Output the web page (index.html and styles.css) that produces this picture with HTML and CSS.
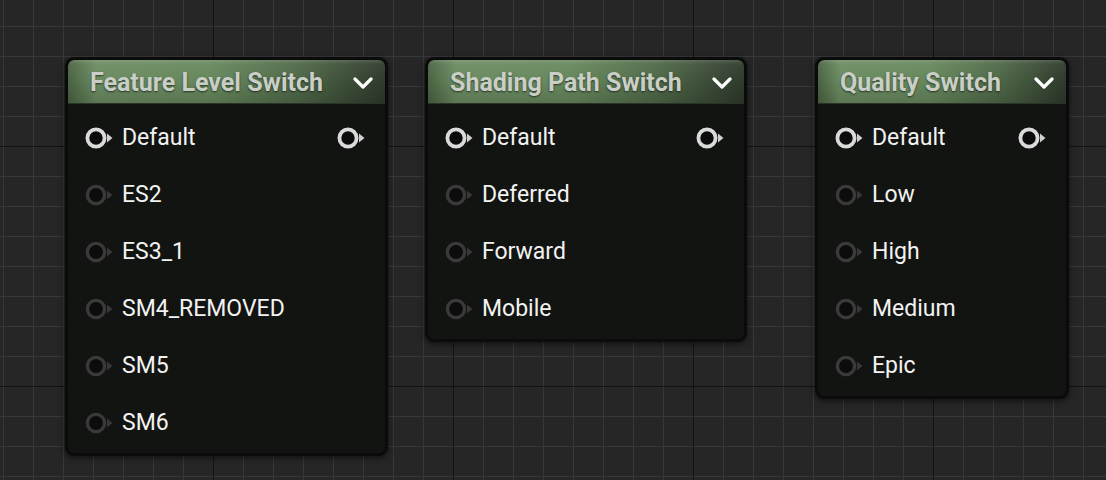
FILE: index.html
```
<!DOCTYPE html>
<html>
<head>
<meta charset="utf-8">
<link rel="stylesheet" href="styles.css">
</head>
<body>
<div class="canvas">
  <div class="node node-feature">
    <div class="header">
      <span class="title">Feature Level Switch</span>
      <svg class="chev" viewBox="0 0 20 12" width="20" height="12"><polyline points="2,2 10,10 18,2" fill="none" stroke="#fff" stroke-width="3.2" stroke-linecap="round" stroke-linejoin="round"/></svg>
    </div>
    <div class="body">
      <div class="row">
        <span class="pin on"><svg viewBox="0 0 30 22" width="30" height="22"><circle cx="11" cy="11" r="8.6" fill="#0c0c0c" stroke="#dadada" stroke-width="3.8"/><polygon points="22,6.5 27.5,11 22,15.5" fill="#d0d0d0"/></svg></span>
        <span class="label">Default</span>
        <span class="pin on out"><svg viewBox="0 0 30 22" width="30" height="22"><circle cx="11" cy="11" r="8.6" fill="#0c0c0c" stroke="#dadada" stroke-width="3.8"/><polygon points="22,6.5 27.5,11 22,15.5" fill="#d0d0d0"/></svg></span>
      </div>
      <div class="row"><span class="pin off"><svg viewBox="0 0 30 22" width="30" height="22"><circle cx="11" cy="11" r="8.6" fill="#0c0c0c" stroke="#3a3a3a" stroke-width="3.4"/><polygon points="22,6.5 27.5,11 22,15.5" fill="#383838"/></svg></span><span class="label">ES2</span></div>
      <div class="row"><span class="pin off"><svg viewBox="0 0 30 22" width="30" height="22"><circle cx="11" cy="11" r="8.6" fill="#0c0c0c" stroke="#3a3a3a" stroke-width="3.4"/><polygon points="22,6.5 27.5,11 22,15.5" fill="#383838"/></svg></span><span class="label">ES3_1</span></div>
      <div class="row"><span class="pin off"><svg viewBox="0 0 30 22" width="30" height="22"><circle cx="11" cy="11" r="8.6" fill="#0c0c0c" stroke="#3a3a3a" stroke-width="3.4"/><polygon points="22,6.5 27.5,11 22,15.5" fill="#383838"/></svg></span><span class="label">SM4_REMOVED</span></div>
      <div class="row"><span class="pin off"><svg viewBox="0 0 30 22" width="30" height="22"><circle cx="11" cy="11" r="8.6" fill="#0c0c0c" stroke="#3a3a3a" stroke-width="3.4"/><polygon points="22,6.5 27.5,11 22,15.5" fill="#383838"/></svg></span><span class="label">SM5</span></div>
      <div class="row"><span class="pin off"><svg viewBox="0 0 30 22" width="30" height="22"><circle cx="11" cy="11" r="8.6" fill="#0c0c0c" stroke="#3a3a3a" stroke-width="3.4"/><polygon points="22,6.5 27.5,11 22,15.5" fill="#383838"/></svg></span><span class="label">SM6</span></div>
    </div>
  </div>

  <div class="node node-shading">
    <div class="header">
      <span class="title">Shading Path Switch</span>
      <svg class="chev" viewBox="0 0 20 12" width="20" height="12"><polyline points="2,2 10,10 18,2" fill="none" stroke="#fff" stroke-width="3.2" stroke-linecap="round" stroke-linejoin="round"/></svg>
    </div>
    <div class="body">
      <div class="row">
        <span class="pin on"><svg viewBox="0 0 30 22" width="30" height="22"><circle cx="11" cy="11" r="8.6" fill="#0c0c0c" stroke="#dadada" stroke-width="3.8"/><polygon points="22,6.5 27.5,11 22,15.5" fill="#d0d0d0"/></svg></span>
        <span class="label">Default</span>
        <span class="pin on out"><svg viewBox="0 0 30 22" width="30" height="22"><circle cx="11" cy="11" r="8.6" fill="#0c0c0c" stroke="#dadada" stroke-width="3.8"/><polygon points="22,6.5 27.5,11 22,15.5" fill="#d0d0d0"/></svg></span>
      </div>
      <div class="row"><span class="pin off"><svg viewBox="0 0 30 22" width="30" height="22"><circle cx="11" cy="11" r="8.6" fill="#0c0c0c" stroke="#3a3a3a" stroke-width="3.4"/><polygon points="22,6.5 27.5,11 22,15.5" fill="#383838"/></svg></span><span class="label">Deferred</span></div>
      <div class="row"><span class="pin off"><svg viewBox="0 0 30 22" width="30" height="22"><circle cx="11" cy="11" r="8.6" fill="#0c0c0c" stroke="#3a3a3a" stroke-width="3.4"/><polygon points="22,6.5 27.5,11 22,15.5" fill="#383838"/></svg></span><span class="label">Forward</span></div>
      <div class="row"><span class="pin off"><svg viewBox="0 0 30 22" width="30" height="22"><circle cx="11" cy="11" r="8.6" fill="#0c0c0c" stroke="#3a3a3a" stroke-width="3.4"/><polygon points="22,6.5 27.5,11 22,15.5" fill="#383838"/></svg></span><span class="label">Mobile</span></div>
    </div>
  </div>

  <div class="node node-quality">
    <div class="header">
      <span class="title">Quality Switch</span>
      <svg class="chev" viewBox="0 0 20 12" width="20" height="12"><polyline points="2,2 10,10 18,2" fill="none" stroke="#fff" stroke-width="3.2" stroke-linecap="round" stroke-linejoin="round"/></svg>
    </div>
    <div class="body">
      <div class="row">
        <span class="pin on"><svg viewBox="0 0 30 22" width="30" height="22"><circle cx="11" cy="11" r="8.6" fill="#0c0c0c" stroke="#dadada" stroke-width="3.8"/><polygon points="22,6.5 27.5,11 22,15.5" fill="#d0d0d0"/></svg></span>
        <span class="label">Default</span>
        <span class="pin on out"><svg viewBox="0 0 30 22" width="30" height="22"><circle cx="11" cy="11" r="8.6" fill="#0c0c0c" stroke="#dadada" stroke-width="3.8"/><polygon points="22,6.5 27.5,11 22,15.5" fill="#d0d0d0"/></svg></span>
      </div>
      <div class="row"><span class="pin off"><svg viewBox="0 0 30 22" width="30" height="22"><circle cx="11" cy="11" r="8.6" fill="#0c0c0c" stroke="#3a3a3a" stroke-width="3.4"/><polygon points="22,6.5 27.5,11 22,15.5" fill="#383838"/></svg></span><span class="label">Low</span></div>
      <div class="row"><span class="pin off"><svg viewBox="0 0 30 22" width="30" height="22"><circle cx="11" cy="11" r="8.6" fill="#0c0c0c" stroke="#3a3a3a" stroke-width="3.4"/><polygon points="22,6.5 27.5,11 22,15.5" fill="#383838"/></svg></span><span class="label">High</span></div>
      <div class="row"><span class="pin off"><svg viewBox="0 0 30 22" width="30" height="22"><circle cx="11" cy="11" r="8.6" fill="#0c0c0c" stroke="#3a3a3a" stroke-width="3.4"/><polygon points="22,6.5 27.5,11 22,15.5" fill="#383838"/></svg></span><span class="label">Medium</span></div>
      <div class="row"><span class="pin off"><svg viewBox="0 0 30 22" width="30" height="22"><circle cx="11" cy="11" r="8.6" fill="#0c0c0c" stroke="#3a3a3a" stroke-width="3.4"/><polygon points="22,6.5 27.5,11 22,15.5" fill="#383838"/></svg></span><span class="label">Epic</span></div>
    </div>
  </div>
</div>
</body>
</html>
```
FILE: styles.css
```
html, body {
  margin: 0;
  padding: 0;
  width: 1106px;
  height: 480px;
  overflow: hidden;
  background: #262626;
}
.canvas {
  position: relative;
  width: 1106px;
  height: 480px;
  font-family: Roboto, "Liberation Sans", sans-serif;
  background-color: #262626;
  background-image:
    linear-gradient(to right, #131313 0, #131313 1px, transparent 1px),
    linear-gradient(to bottom, #131313 0, #131313 1px, transparent 1px),
    linear-gradient(to right, #383838 0, #383838 1px, transparent 1px),
    linear-gradient(to bottom, #383838 0, #383838 1px, transparent 1px);
  background-size: 240px 240px, 240px 240px, 30px 30px, 30px 30px;
  background-position: 213px 0, 0 146px, 3px 0, 0 26px;
}
.node {
  position: absolute;
  top: 57px;
  box-sizing: border-box;
  border: 3px solid #0b0b0b;
  border-radius: 9px;
  background: #121411;
  box-shadow: 0 2px 6px rgba(0,0,0,0.55);
  overflow: hidden;
}
.node-feature { left: 65px; width: 323px; }
.node-shading { left: 425px; width: 322px; }
.node-quality { left: 815px; width: 254px; }

.header {
  box-sizing: border-box;
  height: 44px;
  display: flex;
  align-items: center;
  justify-content: space-between;
  padding: 2px 12px 0 22px;
  border-radius: 6px 6px 0 0;
  background:
    linear-gradient(to bottom, rgba(255,255,255,0.16) 0, rgba(255,255,255,0.05) 4px, rgba(0,0,0,0) 20px, rgba(0,0,0,0.15) 100%),
    linear-gradient(to right, #4a6343 0%, #6c8c62 9%, #67885d 45%, #506a49 72%, #2f3a2c 100%);
  border-bottom: 1px solid #2a3327;
}
.title {
  color: #c9cfc6;
  font-weight: 700;
  font-size: 25px;
  letter-spacing: 0;
  text-shadow: 0 1px 2px rgba(0,0,0,0.6);
  white-space: nowrap;
}
.chev { display: block; }

.body {
  padding: 5px 0 2px 0;
}
.row {
  height: 57px;
  display: flex;
  align-items: center;
  padding: 0 18px 0 17px;
}
.pin {
  display: flex;
  width: 30px;
  height: 22px;
  flex: none;
}
.pin svg { display: block; }
.label {
  margin-left: 7px;
  color: #f2f2f2;
  font-size: 23px;
  white-space: nowrap;
}
.out { margin-left: auto; }
```
